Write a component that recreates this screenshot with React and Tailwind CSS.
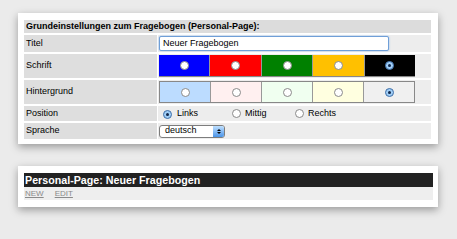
import React from 'react';

const font = { fontFamily: '"Liberation Sans", Arial, sans-serif' };

// Aqua-ish radio knob
const Radio = ({ checked }) =>
  checked ? (
    <span className="inline-flex h-[9px] w-[9px] items-center justify-center rounded-full border border-[#3f6fa8] bg-[#9fcdf5]">
      <span className="h-[3px] w-[3px] rounded-full bg-[#10264a]"></span>
    </span>
  ) : (
    <span className="inline-block h-[9px] w-[9px] rounded-full border border-[#8a8a8a] bg-white"></span>
  );

const Swatches = ({ colors, checkedIndex, framed }) => (
  <div className={`flex h-[22px] w-[256px] ${framed ? 'border border-[#888]' : 'border-b border-[#888]'}`}>
    {colors.map((c, i) => (
      <div
        key={c}
        className={`flex flex-1 items-center justify-center ${i > 0 ? 'border-l border-[#999]' : ''}`}
        style={{ backgroundColor: c }}
      >
        <Radio checked={i === checkedIndex} />
      </div>
    ))}
  </div>
);

const Row = ({ label, h, children }) => (
  <div className="flex gap-px" style={{ height: h }}>
    <div className="flex w-[133px] items-center bg-[#dedede] pl-[2px] text-[9px] text-black">{label}</div>
    <div className="flex flex-1 items-center bg-[#ededed] pl-[1px]">{children}</div>
  </div>
);

export default function App() {
  return (
    <div className="h-[239px] w-[457px] overflow-hidden bg-[#ebebeb] pl-[18px] pt-[13px]" style={font}>
      {/* Einstellungen */}
      <div className="w-[420px] bg-white pb-[5px] pl-[6px] pt-[7px] shadow-[0_3px_8px_rgba(0,0,0,0.35)]">
        <div className="flex w-[407px] flex-col gap-[2px]">
          <div className="flex h-[13px] items-center bg-[#dcdcdc] pl-[2px] text-[9px] font-bold text-black">
            Grundeinstellungen zum Fragebogen (Personal-Page):
          </div>
          <Row label="Titel" h={17}>
            <div className="flex h-[15px] w-[230px] items-center rounded-[2px] border border-[#6f9fd8] bg-white pl-[3px] text-[9px] text-black shadow-[0_0_2px_#8db8ec]">
              Neuer Fragebogen
            </div>
          </Row>
          <Row label="Schrift" h={24}>
            <Swatches colors={['#0000ff', '#ff0000', '#008000', '#ffc000', '#000000']} checkedIndex={4} />
          </Row>
          <Row label="Hintergrund" h={24}>
            <Swatches colors={['#bcdcff', '#fff0f0', '#f0fff0', '#ffffe0', '#f0f0f0']} checkedIndex={4} framed />
          </Row>
          <Row label="Position" h={15}>
            <div className="flex items-center text-[9px] text-black">
              <span className="ml-[4px]"><Radio checked /></span>
              <span className="ml-[5px] w-[55px]">Links</span>
              <Radio />
              <span className="ml-[4px] w-[50px]">Mittig</span>
              <Radio />
              <span className="ml-[4px]">Rechts</span>
            </div>
          </Row>
          <Row label="Sprache" h={16}>
            <div className="flex h-[13px] w-[66px] items-center overflow-hidden rounded-[3px] border border-[#7d7d7d] bg-white text-[9px] text-black">
              <span className="flex-1 pl-[5px]">deutsch</span>
              <span className="flex h-full w-[11px] flex-col items-center justify-center gap-[1px] bg-gradient-to-b from-[#bfe0ff] to-[#4a94e6]">
                <span className="h-0 w-0 border-x-[2px] border-b-[2px] border-x-transparent border-b-black"></span>
                <span className="h-0 w-0 border-x-[2px] border-t-[2px] border-x-transparent border-t-black"></span>
              </span>
            </div>
          </Row>
        </div>
      </div>

      {/* Vorschau */}
      <div className="mt-[22px] w-[420px] bg-white pb-[7px] pl-[6px] pt-[7px] shadow-[0_3px_8px_rgba(0,0,0,0.35)]">
        <div className="w-[409px]">
          <div className="flex h-[14px] items-center bg-[#222] pl-[1px] text-[10.7px] font-bold text-white">
            Personal-Page: Neuer Fragebogen
          </div>
          <div className="flex h-[13px] items-center gap-[11px] bg-[#eeeeee] pl-[1px] text-[8px] text-[#8a8a8a]">
            <span className="underline">NEW</span>
            <span className="underline">EDIT</span>
          </div>
        </div>
      </div>
    </div>
  );
}
